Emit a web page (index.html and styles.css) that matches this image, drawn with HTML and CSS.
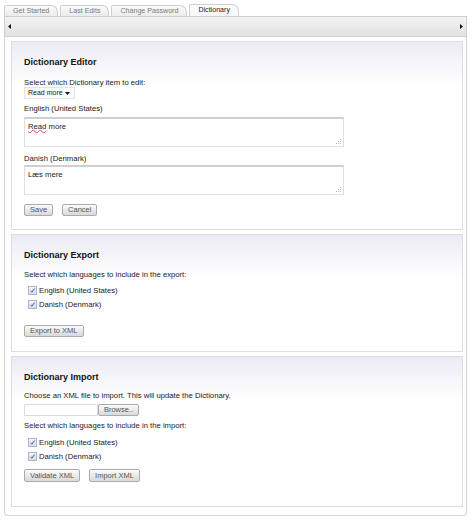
FILE: index.html
```
<!DOCTYPE html>
<html lang="en">
<head>
<meta charset="utf-8">
<title>Dictionary</title>
<link rel="stylesheet" href="styles.css">
</head>
<body>
<div class="tabs">
  <div class="tab">Get Started</div>
  <div class="tab">Last Edits</div>
  <div class="tab">Change Password</div>
  <div class="tab active">Dictionary</div>
</div>
<div class="toolbar">
  <svg class="arrow" width="3" height="5" viewBox="0 0 3 5"><path d="M3 0 L0 2.5 L3 5 Z" fill="#111"/></svg>
  <svg class="arrow" width="3" height="5" viewBox="0 0 3 5"><path d="M0 0 L3 2.5 L0 5 Z" fill="#111"/></svg>
</div>
<div class="container">
  <section class="panel panel-editor">
    <h2>Dictionary Editor</h2>
    <p class="lbl lbl-select">Select which Dictionary item to edit:</p>
    <div class="select"><span class="select-text">Read more</span><svg width="5" height="3" viewBox="0 0 5 3"><path d="M0 0 L5 0 L2.5 3 Z" fill="#111"/></svg></div>
    <p class="lbl lbl-en">English (United States)</p>
    <div class="ta-wrap ta-en">
      <div class="ta"><span class="spell">Read</span> more</div>
      <svg class="grip" width="6" height="6" viewBox="0 0 6 6"><g fill="#bbb"><rect x="4" y="0" width="1" height="1"/><rect x="2" y="2" width="1" height="1"/><rect x="4" y="2" width="1" height="1"/><rect x="0" y="4" width="1" height="1"/><rect x="2" y="4" width="1" height="1"/><rect x="4" y="4" width="1" height="1"/></g></svg>
    </div>
    <p class="lbl lbl-da">Danish (Denmark)</p>
    <div class="ta-wrap ta-da">
      <div class="ta">Læs mere</div>
      <svg class="grip" width="6" height="6" viewBox="0 0 6 6"><g fill="#bbb"><rect x="4" y="0" width="1" height="1"/><rect x="2" y="2" width="1" height="1"/><rect x="4" y="2" width="1" height="1"/><rect x="0" y="4" width="1" height="1"/><rect x="2" y="4" width="1" height="1"/><rect x="4" y="4" width="1" height="1"/></g></svg>
    </div>
    <div class="buttons buttons-editor">
      <button class="btn">Save</button>
      <button class="btn">Cancel</button>
    </div>
  </section>

  <section class="panel panel-export">
    <h2>Dictionary Export</h2>
    <p class="lbl lbl-langs">Select which languages to include in the export:</p>
    <div class="cb-row cb-first"><span class="cb"><svg width="7" height="7" viewBox="0 0 7 7"><path d="M1.5 3.8 L2.9 5.2 L5.6 1.5" fill="none" stroke="#3550a0" stroke-width="1"/></svg></span>English (United States)</div>
    <div class="cb-row cb-second"><span class="cb"><svg width="7" height="7" viewBox="0 0 7 7"><path d="M1.5 3.8 L2.9 5.2 L5.6 1.5" fill="none" stroke="#3550a0" stroke-width="1"/></svg></span>Danish (Denmark)</div>
    <div class="buttons buttons-export">
      <button class="btn">Export to XML</button>
    </div>
  </section>

  <section class="panel panel-import">
    <h2>Dictionary Import</h2>
    <p class="lbl lbl-choose">Choose an XML file to import. This will update the Dictionary.</p>
    <div class="file-row">
      <span class="file-input"></span>
      <button class="btn btn-browse">Browse..</button>
    </div>
    <p class="lbl lbl-import">Select which languages to include in the import:</p>
    <div class="cb-row cb-import"><span class="cb"><svg width="7" height="7" viewBox="0 0 7 7"><path d="M1.5 3.8 L2.9 5.2 L5.6 1.5" fill="none" stroke="#3550a0" stroke-width="1"/></svg></span>English (United States)</div>
    <div class="cb-row cb-second"><span class="cb"><svg width="7" height="7" viewBox="0 0 7 7"><path d="M1.5 3.8 L2.9 5.2 L5.6 1.5" fill="none" stroke="#3550a0" stroke-width="1"/></svg></span>Danish (Denmark)</div>
    <div class="buttons buttons-import">
      <button class="btn">Validate XML</button>
      <button class="btn">Import XML</button>
    </div>
  </section>
</div>
</body>
</html>
```
FILE: styles.css
```
* { box-sizing: border-box; }

body {
  margin: 0;
  padding: 0 7px 0 4px;
  background: #fff;
  font-family: "Liberation Sans", Arial, sans-serif;
  font-size: 7.7px;
  color: #222;
}

p { margin: 0; }

/* tabs */
.tabs {
  display: flex;
  align-items: flex-end;
  gap: 2px;
  height: 16px;
  padding: 4px 0 0 0;
}
.tab {
  height: 11px;
  padding: 0 8px;
  border: 1px solid #cfcfcf;
  border-bottom: none;
  border-radius: 2px 7px 0 0;
  background: linear-gradient(#fbfbfb, #ebebeb);
  color: #7a7a7a;
  font-size: 7.1px;
  line-height: 10px;
  white-space: nowrap;
}
.tab.active {
  height: 12px;
  background: linear-gradient(#fefefe, #f6f6f6);
  color: #222;
  line-height: 11px;
}

/* toolbar */
.toolbar {
  display: flex;
  align-items: center;
  justify-content: space-between;
  height: 21px;
  padding: 0 3px;
  border: 1px solid #cfcfcf;
  background: linear-gradient(#f4f4f4, #e1e1e1);
}
.arrow { display: block; }

/* container */
.container {
  display: flex;
  flex-direction: column;
  gap: 4px;
  padding: 4px 3px 8px 6px;
  border: 1px solid #d4d4d4;
  border-top: none;
  border-radius: 0 0 4px 4px;
}

.panel {
  display: flex;
  flex-direction: column;
  align-items: flex-start;
  padding: 14px 12px 13px 12px;
  border: 1px solid #dedede;
  background: linear-gradient(#eceaf5 0, #f6f6fb 22px, #fff 44px);
}
.panel-export { padding-bottom: 14px; }
.panel-import { padding-bottom: 24px; }

h2 {
  margin: 0;
  font-size: 9px;
  line-height: 12px;
  font-weight: bold;
  color: #111;
}

.lbl { line-height: 10px; white-space: nowrap; }
.lbl-select { margin-top: 10px; line-height: 9px; }
.lbl-en { margin-top: 5px; }
.lbl-da { margin-top: 7px; }
.lbl-langs { margin-top: 9px; }
.lbl-choose { margin-top: 8px; }
.lbl-import { margin-top: 5px; }

/* select */
.select {
  display: flex;
  align-items: center;
  justify-content: space-between;
  width: 51px;
  height: 12px;
  padding: 0 4px 0 3px;
  border: 1px solid #e4e4e4;
  background: #fbfbfb;
  color: #222;
  line-height: 10px;
}
.select-text { white-space: nowrap; flex-shrink: 0; font-size: 7px; }
.select svg { display: block; flex-shrink: 0; }

/* textareas */
.ta-wrap {
  position: relative;
  width: 320px;
  height: 30px;
}
.ta-en { margin-top: 3px; }
.ta-da { margin-top: 1px; }
.ta {
  height: 100%;
  padding: 3px 3px;
  border: 1px solid #e0e0e0;
  border-top: 2px solid #cfcfcf;
  background: #fff;
  line-height: 9px;
  color: #222;
}
.spell {
  text-decoration: underline wavy #e05050;
  text-decoration-thickness: 0.6px;
  text-underline-offset: 0;
}
.grip {
  position: absolute;
  right: 2px;
  bottom: 2px;
}

/* buttons */
.buttons {
  display: flex;
  gap: 9px;
}
.buttons-editor { margin-top: 9px; }
.buttons-export { margin-top: 16px; }
.buttons-import { margin-top: 8px; }

.btn {
  height: 12px;
  padding: 0 5px;
  margin: 0;
  border: 1px solid #ababab;
  border-radius: 2px;
  background: linear-gradient(#fcfcfc, #e6e6e6 60%, #d9d9d9);
  font-family: "Liberation Sans", Arial, sans-serif;
  font-size: 7.5px;
  line-height: 10px;
  color: #555;
  white-space: nowrap;
}
.buttons-import .btn { height: 13px; }

/* checkboxes */
.cb-row {
  display: flex;
  align-items: center;
  gap: 2px;
  height: 10px;
  padding-left: 4px;
  white-space: nowrap;
}
.cb-first { margin-top: 5px; }
.cb-second { margin-top: 4px; }
.cb-import { margin-top: 6px; }
.cb {
  display: flex;
  align-items: center;
  justify-content: center;
  width: 9px;
  height: 9px;
  border: 1px solid #b0b4c2;
  background: linear-gradient(#f4f5fa, #dadeea);
}
.cb svg { display: block; }

/* file input */
.file-row {
  display: flex;
  align-items: stretch;
  height: 12px;
  margin-top: 3px;
}
.file-input {
  width: 74px;
  border: 1px solid #dcdcdc;
  background: #fff;
}
.btn-browse {
  width: 41px;
  padding: 0;
}
```
